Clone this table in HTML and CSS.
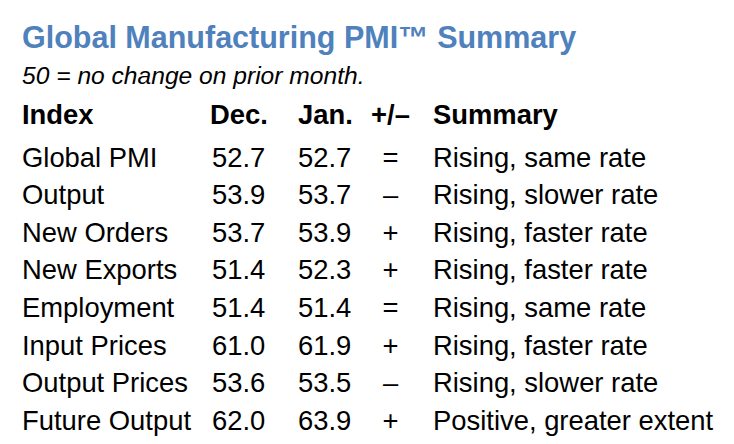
FILE: index.html
```html
<!DOCTYPE html>
<html>
<head>
<meta charset="utf-8">
<link rel="stylesheet" href="styles.css">
</head>
<body>
<div class="panel">
  <h1 class="title">Global Manufacturing PMI™ Summary</h1>
  <p class="note">50 = no change on prior month.</p>
  <div class="table">
    <div class="row head">
      <span class="c-name">Index</span><span class="c-dec">Dec.</span><span class="c-jan">Jan.</span><span class="c-chg">+/–</span><span class="c-sum">Summary</span>
    </div>
    <div class="row"><span class="c-name">Global PMI</span><span class="c-dec">52.7</span><span class="c-jan">52.7</span><span class="c-chg">=</span><span class="c-sum">Rising, same rate</span></div>
    <div class="row"><span class="c-name">Output</span><span class="c-dec">53.9</span><span class="c-jan">53.7</span><span class="c-chg">–</span><span class="c-sum">Rising, slower rate</span></div>
    <div class="row"><span class="c-name">New Orders</span><span class="c-dec">53.7</span><span class="c-jan">53.9</span><span class="c-chg">+</span><span class="c-sum">Rising, faster rate</span></div>
    <div class="row"><span class="c-name">New Exports</span><span class="c-dec">51.4</span><span class="c-jan">52.3</span><span class="c-chg">+</span><span class="c-sum">Rising, faster rate</span></div>
    <div class="row"><span class="c-name">Employment</span><span class="c-dec">51.4</span><span class="c-jan">51.4</span><span class="c-chg">=</span><span class="c-sum">Rising, same rate</span></div>
    <div class="row"><span class="c-name">Input Prices</span><span class="c-dec">61.0</span><span class="c-jan">61.9</span><span class="c-chg">+</span><span class="c-sum">Rising, faster rate</span></div>
    <div class="row"><span class="c-name">Output Prices</span><span class="c-dec">53.6</span><span class="c-jan">53.5</span><span class="c-chg">–</span><span class="c-sum">Rising, slower rate</span></div>
    <div class="row"><span class="c-name">Future Output</span><span class="c-dec">62.0</span><span class="c-jan">63.9</span><span class="c-chg">+</span><span class="c-sum">Positive, greater extent</span></div>
  </div>
</div>
</body>
</html>
```
FILE: styles.css
```css
html, body {
  margin: 0;
  padding: 0;
  background: #ffffff;
}
body {
  font-family: "Liberation Sans", Arial, sans-serif;
  color: #000000;
}
.panel {
  padding: 18px 0 0 22px;
}
.title {
  margin: 0;
  font-size: 30.5px;
  line-height: 38px;
  font-weight: bold;
  color: #4f81bd;
}
.note {
  margin: 0;
  font-size: 24.6px;
  line-height: 39px;
  font-style: italic;
}
.table {
  display: flex;
  flex-direction: column;
  margin-top: 1px;
}
.row {
  display: grid;
  grid-template-columns: 188px 88px 73px 62px 1fr;
  font-size: 27.4px;
  line-height: 37.6px;
  white-space: nowrap;
}
.row.head {
  font-weight: bold;
  margin-bottom: 5px;
}
.c-dec { padding-left: 2px; }
.head .c-dec { padding-left: 0; }
.c-chg { text-align: center; padding-right: 23px; }
```
